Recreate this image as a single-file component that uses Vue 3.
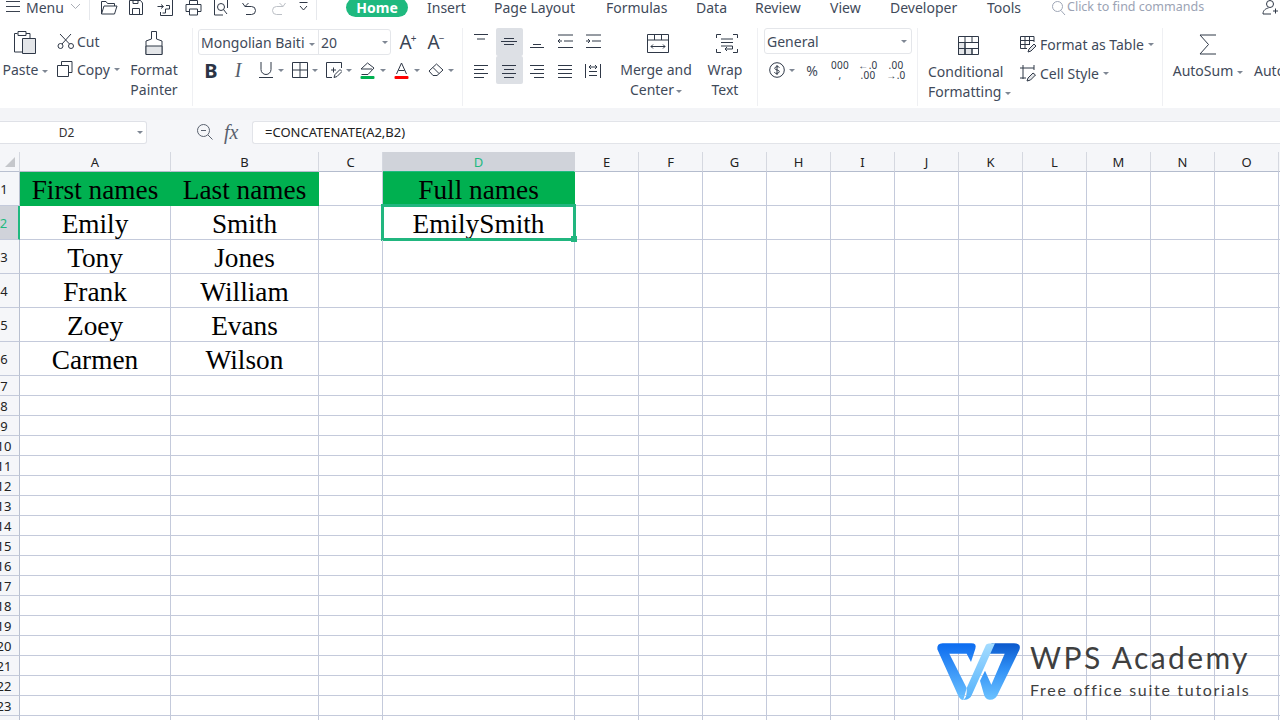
<script setup>
const cols = ['A','B','C','D','E','F','G','H','I','J','K','L','M','N','O','P']
const rows = Array.from({ length: 24 }, (_, i) => i + 1)
const data = {
  A1: 'First names', B1: 'Last names', D1: 'Full names',
  A2: 'Emily', B2: 'Smith', D2: 'EmilySmith',
  A3: 'Tony', B3: 'Jones',
  A4: 'Frank', B4: 'William',
  A5: 'Zoey', B5: 'Evans',
  A6: 'Carmen', B6: 'Wilson'
}
const isHead = (c, r) => r === 1 && (c === 'A' || c === 'B' || c === 'D')
const tabs = [
  { t: 'Insert', w: 67 }, { t: 'Page Layout', w: 112 }, { t: 'Formulas', w: 90 },
  { t: 'Data', w: 59 }, { t: 'Review', w: 75 }, { t: 'View', w: 60 },
  { t: 'Developer', w: 97 }, { t: 'Tools', w: 64 }
]
const aligns = [
  { d: 'M7 6.500h14M10 11h8', a: false },
  { d: 'M6 13.500h16M9 10.500h10M9 16.500h10', a: true },
  { d: 'M10 16.500h8M7 19.500h14', a: false },
  { d: 'M7 7h15M13 13h9M7 19.500h15M11 13H7m2-2l-2 2 2 2', a: false },
  { d: 'M7 7h15M7 19.500h15M13 13h9M7 13h4m-2-2l2 2-2 2', a: false },
  { d: 'M7 9.500h14M7 13.500h10M7 17.500h14M7 21.500h10', a: false },
  { d: 'M7 9.500h14M9 13.500h10M7 17.500h14M9 21.500h10', a: true },
  { d: 'M7 9.500h14M11 13.500h10M7 17.500h14M11 21.500h10', a: false },
  { d: 'M7 9.500h14M7 13.500h14M7 17.500h14M7 21.500h14', a: false },
  { d: 'M6.500 8v14M21.500 8v14M10 11h8M10 11l2-2M10 11l2 2M18 11l-2-2M18 11l-2 2M10 15.500h8M10 19.500h8', a: false }
]
</script>

<template>
  <div class="app">
    <div class="topbar">
      <svg class="ti hamburger" width="16" height="14" viewBox="0 0 16 14"><path d="M1 1.500h14M1 6.500h14M1 11.500h14"/></svg>
      <span class="menu">Menu</span>
      <svg class="ti chev" width="11" height="7" viewBox="0 0 11 7"><path d="M1 1l4.500 4.500L10 1"/></svg>
      <span class="vsep"></span>
      <div class="quick">
        <svg class="ti" width="18" height="16" viewBox="0 0 18 16"><path d="M1.500 14V1.500H6L7.500 3.500H14.500V6M1.500 14L4 6H17L14.500 14Z"/></svg>
        <svg class="ti" width="16" height="16" viewBox="0 0 16 16"><path d="M1.500 0.500H12.500L14.500 3V14.500H1.500ZM4.500 14.500V8.500H11.500V14.500M5 .5V3.500H10V.5"/></svg>
        <svg class="ti" width="16" height="16" viewBox="0 0 16 16"><path d="M5.500 0V-1H15.500V15.500H3.500V12M0.500 6.500H6M4 4.500L6.500 6.500 4 8.500M9 5.500H12.500V9H8.500V13H5.500"/></svg>
        <svg class="ti" width="17" height="16" viewBox="0 0 17 16"><path d="M4.500 4V0.500H12.500V4M4.500 11.500H1V4.500H16V11.500H12.500M4.500 9H12.500V15H4.500Z"/></svg>
        <svg class="ti" width="17" height="16" viewBox="0 0 17 16"><path d="M1.500 0V15H10M14.500 0V8"/><circle cx="8" cy="7" r="3.500"/><path d="M10.500 9.500L14 14"/></svg>
        <svg class="ti" width="17" height="16" viewBox="0 0 17 16"><path d="M4 6.500H10.500A4 4 0 0 1 10.500 14.500H5M1.500 3L4 6.500 7.500 3"/></svg>
        <svg class="ti faded" width="17" height="16" viewBox="0 0 17 16"><path d="M13 6.500H6.500A4 4 0 0 0 6.500 14.500H12M15.500 3L13 6.500 9.500 3"/></svg>
        <svg class="ti" width="11" height="14" viewBox="0 0 11 14"><path d="M1.500 2.500h8M2 6l3.500 4L9 6"/></svg>
      </div>
      <span class="vsep second"></span>
      <span class="pill">Home</span>
      <div class="tabs">
        <span v-for="t in tabs" :key="t.t" class="tab" :style="{ width: t.w + 'px' }">{{ t.t }}</span>
      </div>
      <svg class="ti search" width="16" height="16" viewBox="0 0 16 16"><circle cx="6.500" cy="6.500" r="5"/><path d="M10 10.500L14 15"/></svg>
      <span class="find">Click to find commands</span>
      <svg class="ti user" width="17" height="15" viewBox="0 0 17 15"><circle cx="8" cy="4" r="3.500"/><path d="M1 14C1 10 4 8.500 6.500 8M1 14H9M11 11H16M13.500 8.500V13.500"/></svg>
    </div>

    <div class="ribbon">
      <section class="grp g1">
        <div class="tool paste">
          <div class="ic">
            <svg class="ri" width="22" height="23" viewBox="0 0 22 23"><path d="M3.500 2.500H.5V21H8M12 2.500H16V7M4 .5H12V4.500H4Z"/><path class="fill" d="M8.500 7.500H21.500V22.500H8.500Z"/></svg>
          </div>
          <div class="lbl">Paste<i class="caret"></i></div>
        </div>
        <div class="stack cutcopy">
          <div class="row cut">
            <svg class="ri" width="18" height="17" viewBox="0 0 18 17"><circle cx="3.500" cy="13" r="2.500"/><circle cx="14" cy="13" r="2.500"/><path d="M5 11L14 1M12.500 11L3 1"/></svg>
            <span>Cut</span>
          </div>
          <div class="row copy">
            <svg class="ri" width="16" height="16" viewBox="0 0 16 16"><path d="M4.500 4V.5H15V11.500H11.500M.5 4.500H11.500V15.500H.5Z"/></svg>
            <span>Copy</span><i class="caret"></i>
          </div>
        </div>
        <div class="tool painter">
          <div class="ic">
            <svg class="ri" width="18" height="24" viewBox="0 0 18 24"><path d="M6.500 .5H11.500V8L17 10V23.500H1V10L6.500 8Z"/><path class="fill" d="M1 15H17V23.500H1Z"/></svg>
          </div>
          <div class="lbl">Format<br>Painter</div>
        </div>
      </section>

      <section class="grp g2">
        <div class="fontrow">
          <div class="fselect">
            <div class="fname">Mongolian Baiti<i class="caret"></i></div>
            <div class="fsize">20<i class="caret"></i></div>
          </div>
          <span class="bigA first">A<sup>+</sup></span>
          <span class="bigA">A<sup>−</sup></span>
        </div>
        <div class="fmtrow">
          <b class="bold">B</b>
          <i class="ital">I</i>
          <div class="slot"><svg class="ri" width="16" height="18" viewBox="0 0 16 18"><path d="M3 1V8.500A5 5 0 0 0 13 8.500V1M1 16.500H15"/></svg><i class="caret"></i></div>
          <div class="slot"><svg class="ri" width="16" height="16" viewBox="0 0 16 16"><path d="M.5.5H15.500V15.500H.5ZM8 .5V15.500M.5 8H15.500"/></svg><i class="caret"></i></div>
          <div class="slot"><svg class="ri" width="16" height="16" viewBox="0 0 16 16"><path d="M15.500 6V.5H.5V15.500H6M5 8H10M7.500 5.500V10.500"/><path d="M8 15.500L9 12.500 14 7.500 16 9.500 11 14.500Z"/></svg><i class="caret"></i></div>
          <div class="slot"><svg class="ri" width="16" height="17" viewBox="0 0 16 17"><path d="M1 7L7.500 1 14 6 8 12.500H1.500"/><path d="M1 7H12"/><rect class="nostroke green" x="0.500" y="14" width="14" height="3" rx="1"/></svg><i class="caret"></i></div>
          <div class="slot"><svg class="ri" width="16" height="17" viewBox="0 0 16 17"><path d="M2.500 12L7.500 1 12.500 12M4.500 8.500H10.500"/><rect class="nostroke red" x="0.500" y="14" width="14" height="3" rx="1"/></svg><i class="caret"></i></div>
          <div class="slot"><svg class="ri" width="16" height="16" viewBox="0 0 16 16"><path d="M1 9L8.500 2 15 8 9 13.500H5ZM5 5.500L11 11.500"/></svg><i class="caret"></i></div>
        </div>
      </section>

      <section class="grp g3">
        <div class="aligngrid">
          <div v-for="(a, i) in aligns" :key="i" class="al" :class="{ on: a.a }">
            <svg class="ri" width="28" height="28" viewBox="0 0 28 28"><path :d="a.d"/></svg>
          </div>
        </div>
        <div class="tool merge">
          <div class="ic">
            <svg class="ri" width="22" height="19" viewBox="0 0 22 19"><path d="M.5.5H21.500V18.500H.5ZM.5 6H21.500M7.500.5V6M14.500.5V6M4 12.500H18M4 12.500L6 10.500M4 12.500L6 14.500M18 12.500L16 10.500M18 12.500L16 14.500"/></svg>
          </div>
          <div class="lbl">Merge and<br>Center<i class="caret"></i></div>
        </div>
        <div class="tool wrap">
          <div class="ic">
            <svg class="ri" width="22" height="19" viewBox="0 0 22 19"><path d="M5 .5H.5V4M17 .5H21.500V4M5 18.500H.5V15M17 18.500H21.500V15M5 5H17M5 8.500H17M5 12H16.500V15H9M11 13L9 15 11 17"/></svg>
          </div>
          <div class="lbl">Wrap<br>Text</div>
        </div>
      </section>

      <section class="grp g4">
        <div class="numsel">General<i class="caret"></i></div>
        <div class="numrow">
          <div class="dollar"><svg class="ri" width="16" height="16" viewBox="0 0 16 16"><circle cx="8" cy="8" r="7.300"/><path d="M10.500 5.500C9.500 4 5.500 4.500 5.800 6.500 6 8.500 10.500 7.500 10.300 9.700 10 11.700 6 12 5.300 10.300M8 3V13"/></svg><i class="caret"></i></div>
          <span class="pct">%</span>
          <span class="mini thousand">000<br>,</span>
          <span class="mini">←.0<br>.00</span>
          <span class="mini">.00<br>→.0</span>
        </div>
      </section>

      <section class="grp g5">
        <div class="tool cond">
          <div class="ic">
            <svg class="ri" width="21" height="19" viewBox="0 0 21 19"><path class="fill" d="M.5 6.500H7V18.500H.5ZM7 12.500H14V18.500H7Z"/><path d="M.5.5H20.500V18.500H.5ZM.5 6.500H20.500M.5 12.500H20.500M7 .5V18.500M14 .5V6.500M14 12.500V18.500"/></svg>
          </div>
          <div class="lbl">Conditional<br>Formatting<i class="caret"></i></div>
        </div>
        <div class="stack tablecell">
          <div class="row">
            <svg class="ri" width="17" height="17" viewBox="0 0 17 17"><path d="M7 12.500H.5V.5H14V6M.5 4.500H14M.5 8.500H10M5 .5V12.500M9.500 .5V8.500"/><path class="fill" d="M8 16L9 13 14 8 16 10 11 15Z"/></svg>
            <span>Format as Table</span><i class="caret"></i>
          </div>
          <div class="row second">
            <svg class="ri" width="17" height="17" viewBox="0 0 17 17"><path d="M3 0V14M0 3H14M0 13H6M14 0V5"/><path class="fill" d="M7 16L8 13 13 8 15.500 10 10.500 15Z"/></svg>
            <span>Cell Style</span><i class="caret"></i>
          </div>
        </div>
      </section>

      <section class="g6">
        <div class="tool sum">
          <div class="ic">
            <svg class="ri" width="18" height="21" viewBox="0 0 18 21"><path d="M17 1H1L9.500 10.500 1 20H17"/></svg>
          </div>
          <div class="lbl">AutoSum<i class="caret"></i></div>
        </div>
        <div class="auto">Auto</div>
      </section>
    </div>

    <div class="band"></div>

    <div class="formula">
      <div class="namebox">D2<i class="caret"></i></div>
      <svg class="ri fzoom" width="18" height="18" viewBox="0 0 18 18"><circle cx="7.500" cy="7.500" r="6"/><path d="M5 7.500H10M12 12L16.500 16.500"/></svg>
      <span class="fx">fx</span>
      <div class="finput">=CONCATENATE(A2,B2)</div>
    </div>

    <div class="sheet">
      <div class="corner"><span class="tri"></span></div>
      <div v-for="c in cols" :key="c" class="colh" :class="{ sel: c === 'D' }">{{ c }}</div>
      <template v-for="r in rows" :key="r">
        <div class="rowh" :class="{ sel: r === 2 }">{{ r }}</div>
        <div
          v-for="c in cols"
          :key="c + r"
          class="cell"
          :class="{ head: isHead(c, r), active: c === 'D' && r === 2 }"
        >{{ data[c + r] }}</div>
      </template>
      <div class="logo">
        <svg width="100" height="68" viewBox="0 0 300 204">
          <defs>
            <linearGradient id="lg1" x1="0" y1="0" x2="0" y2="1"><stop offset="0" stop-color="#0c6cf0"/><stop offset="1" stop-color="#6cc2ff"/></linearGradient>
            <linearGradient id="lg2" x1="0" y1="0" x2="0" y2="1"><stop offset="0" stop-color="#a4dcff"/><stop offset="1" stop-color="#55b2fb"/></linearGradient>
            <linearGradient id="lg3" x1="0" y1="0" x2="0" y2="1"><stop offset="0" stop-color="#0a58cc"/><stop offset=".45" stop-color="#2f8ff5"/><stop offset="1" stop-color="#6cc2ff"/></linearGradient>
          </defs>
          <path fill="url(#lg1)" d="M22 34Q20 16 38 16H124Q141 16 136 32L123 72 110 47H58L110 150 100 186Q90 186 84 172Z"/>
          <path fill="url(#lg3)" d="M185 16H252Q275 16 268 36L202 172Q194 187 178 185 166 183 162 170L150 128 165 98 184 140 224 47H170Z"/>
          <path fill="url(#lg2)" d="M168 20Q172 16 195 16L125 172Q118 187 100 185 112 180 110 150Z"/>
        </svg>
        <div class="lt">
          <div class="lt1">WPS Academy</div>
          <div class="lt2">Free office suite tutorials</div>
        </div>
      </div>
    </div>
  </div>
</template>

<style>
html, body { margin: 0; background: #fff; }
</style>

<style scoped>
.app {
  width: 1280px; height: 720px; overflow: hidden; background: #fff;
  font-family: "Noto Sans", sans-serif; font-size: 14px; color: #3f4a5a;
  display: flex; flex-direction: column;
}
svg { display: block; flex: none; }
.ti, .ri { fill: none; stroke: #2f3847; stroke-width: 1; }
.ri .fill { fill: #e4e6e9; }
.ri .nostroke { stroke: none; }
.ri .green { fill: #00b050; }
.ri .red { fill: #f00; }
.faded { stroke: #bcc0c6; }
.caret {
  display: inline-block; width: 0; height: 0; vertical-align: middle; margin-left: 4px;
  border-left: 3px solid transparent; border-right: 3px solid transparent; border-top: 3px solid #7f8794;
}

.topbar { height: 20px; flex: none; display: flex; align-items: flex-start; position: relative; overflow: hidden; }
.hamburger { margin: 0 0 0 5px; stroke: #3b4350; }
.menu { margin-left: 5px; width: 41px; line-height: 15px; }
.chev { margin: 3px 0 0 3px; stroke: #a9adb5; }
.vsep { width: 1px; height: 20px; background: #e6e8ec; margin-left: 8px; }
.vsep.second { margin-left: 0; }
.quick { display: grid; grid-template-columns: repeat(8, 28.300px); margin-left: 10px; width: 216px; }
.pill {
  margin-left: 29px; margin-top: -2px; width: 62px; height: 19px; line-height: 19px; text-align: center;
  background: #1fb97f; color: #fff; font-weight: 700; border-radius: 10px;
}
.tabs { display: flex; margin-left: 19px; }
.tab { line-height: 15px; white-space: nowrap; }
.search { stroke: #9ea6b6; }
.find { font-size: 12.500px; line-height: 14px; color: #9ba3b4; white-space: nowrap; }
.user { margin-left: auto; margin-right: 1px; }

.ribbon { height: 88px; flex: none; display: flex; }
.grp { flex: none; height: 78px; margin-top: 8px; position: relative; display: flex; box-sizing: border-box; border-right: 1px solid #eff0f3; }
.tool { display: flex; flex-direction: column; align-items: center; text-align: center; flex: none; }
.ic { height: 31px; padding-top: 1px; box-sizing: border-box; display: flex; align-items: flex-start; justify-content: center; }
.lbl { line-height: 20px; white-space: nowrap; }
.stack { display: flex; flex-direction: column; flex: none; }
.row { display: flex; align-items: center; height: 24px; white-space: nowrap; }

.g1 { width: 193px; }
.paste { width: 51px; margin-top: 1px; }
.paste .ic { padding: 2px 2px 0 0; }
.cutcopy { margin-left: 6px; width: 66px; padding-top: 1px; }
.cut span { margin-left: 2px; }
.copy { margin-top: 4px; }
.copy span { margin-left: 4px; }
.painter { width: 60px; margin-left: 1px; margin-top: 1px; }
.painter .ic { padding-top: 2px; }

.g2 { width: 270px; flex-direction: column; padding-left: 5px; }
.fontrow { display: flex; align-items: center; height: 28px; }
.fselect { display: flex; width: 193px; height: 26px; box-sizing: border-box; border: 1px solid #e4e6ea; border-radius: 3px; line-height: 25px; white-space: nowrap; }
.fname { width: 120px; box-sizing: border-box; padding-left: 2px; border-right: 1px solid #e4e6ea; }
.fsize { flex: 1; padding-left: 2px; display: flex; justify-content: space-between; align-items: center; padding-right: 2px; }
.fsize .caret { margin-left: 0; }
.bigA { font-size: 19px; line-height: 26px; width: 28px; text-align: center; color: #3a4454; }
.bigA.first { margin-left: 3px; }
.bigA sup { font-size: 10px; line-height: 0; vertical-align: 7px; margin-left: -1px; }
.fmtrow { display: flex; align-items: center; height: 28px; }
.bold { margin-left: 5px; width: 16px; text-align: center; font-size: 20px; color: #2b3445; }
.ital { margin-left: 11px; width: 16px; text-align: center; font-size: 20px; color: #555e6c; font-family: "Liberation Serif", serif; }
.slot { display: flex; align-items: center; width: 34px; flex: none; }
.ital + .slot { margin-left: 12px; }

.g3 { width: 295px; }
.aligngrid { display: grid; grid-template-columns: repeat(5, 28px); grid-auto-rows: 28px; margin-left: 4px; width: 140px; flex: none; }
.al { width: 27px; height: 28px; margin-left: 1px; border-radius: 2px; }
.al svg { margin-left: -1px; }
.al.on { background: #dde0e5; }
.merge { width: 90px; margin-left: 4px; margin-top: 1px; }
.merge .ic { padding: 5px 0 0 3px; }
.merge .caret { margin-left: 2px; }
.wrap { width: 46px; margin-left: 1px; margin-top: 1px; }
.wrap .ic { padding: 5px 0 0 3px; }

.g4 { width: 160px; flex-direction: column; padding-left: 6px; }
.numsel { width: 148px; height: 26px; box-sizing: border-box; border: 1px solid #e4e6ea; border-radius: 3px; line-height: 25px; padding: 0 2px; display: flex; justify-content: space-between; align-items: center; }
.numsel .caret { margin: 0 2px 0 0; }
.numrow { display: flex; align-items: center; height: 28px; margin-top: 2px; }
.dollar { display: flex; align-items: center; margin-left: 5px; width: 29px; }
.pct { width: 16px; margin-left: 6px; font-size: 14px; text-align: center; }
.mini { font-size: 10px; line-height: 10px; text-align: center; width: 28px; letter-spacing: .3px; color: #2f3847; }
.thousand { margin-left: 6px; }

.g5 { width: 245px; }
.cond { width: 96px; align-items: stretch; }
.cond .ic { height: 34px; padding: 8px 0 0 4px; }
.cond .lbl { text-align: left; padding-left: 10px; }
.tablecell { margin-left: 6px; padding-top: 4px; }
.tablecell span { margin-left: 3px; }
.tablecell .second { margin-top: 5px; }

.g6 { display: flex; margin-top: 8px; flex: 1; min-width: 0; overflow: hidden; }
.sum { width: 90px; }
.sum .ic { height: 33px; padding-top: 6px; }
.auto { margin-top: 33px; line-height: 20px; margin-left: 1px; }

.band { height: 12px; flex: none; background: #f3f4f7; }
.formula {
  height: 32px; flex: none; background: #f5f6f9; display: flex; align-items: flex-start; padding-top: 1px; box-sizing: border-box;
}
.namebox {
  width: 147px; height: 23px; box-sizing: border-box; background: #fff; border: 1px solid #dfe1e7; border-left: 0; border-radius: 0 3px 3px 0;
  font-size: 12px; line-height: 21px; text-align: center; color: #333; position: relative; padding-right: 13px;
}
.namebox .caret { position: absolute; right: 3px; top: 9px; }
.fzoom { margin: 2px 0 0 49px; stroke: #59616e; }
.fx { width: 19px; margin-left: 10px; font-family: "Liberation Serif", serif; font-style: italic; font-size: 20px; line-height: 22px; color: #59616e; }
.finput {
  margin-left: 9px; flex: 1; height: 23px; box-sizing: border-box; background: #fff; border: 1px solid #e2e4e9; border-right: 0; border-radius: 3px 0 0 3px;
  font-size: 13px; line-height: 21px; padding-left: 12px; color: #222;
}

.sheet {
  flex: 1; min-height: 0; position: relative; overflow: hidden; background: #fff;
  display: grid;
  grid-template-columns: 20px 151px 148px 64px 192px repeat(12, 64px);
  grid-template-rows: 20px repeat(6, 34px) repeat(18, 20px);
}
.corner { background: #f5f6f9; border-right: 1px solid #d5d8e0; border-bottom: 1px solid #b9c0d0; box-sizing: border-box; position: relative; }
.tri {
  position: absolute; left: 5px; top: 5px; width: 0; height: 0;
  border-left: 10px solid transparent; border-bottom: 10px solid #c5c7cb;
}
.colh {
  background: #f5f6f9; border-right: 1px solid #d5d8e0; border-bottom: 1px solid #b4bccd; box-sizing: border-box;
  font-size: 13px; line-height: 20px; text-align: center; color: #222;
}
.colh.sel { background: #d0d3da; color: #1fb97f; border-right-color: #d0d3da; border-bottom: 1px solid #1fb97f; }
.rowh {
  background: #f5f6f9; border-right: 1px solid #b9c0d0; border-bottom: 1px solid #c4cadb; box-sizing: border-box;
  font-size: 13px; color: #222; display: flex; align-items: center; justify-content: center; padding-right: 11px; white-space: nowrap;
}
.rowh.sel { background: #d0d3da; color: #1fb97f; border-right: 2px solid #1fb97f; }
.cell {
  border-right: 1px solid #c4cadb; border-bottom: 1px solid #c4cadb; box-sizing: border-box;
  font-family: "Liberation Serif", serif; font-size: 27.300px; color: #000; padding-top: 3px;
  display: flex; align-items: center; justify-content: center; white-space: nowrap; position: relative;
}
.cell.head { background: #00b050; border-color: #00b050; }
.cell.active::after {
  content: ""; position: absolute; left: -2px; top: -2px; right: -2px; bottom: -2px;
  border: 3px solid #21b67f; pointer-events: none;
}
.cell.active::before {
  content: ""; position: absolute; right: -3px; bottom: -3px; width: 6px; height: 6px;
  background: #21b67f; z-index: 1;
}
.logo { position: absolute; left: 930px; top: 486px; display: flex; align-items: flex-start; }
.lt { color: #3f3f3f; white-space: nowrap; }
.lt1 { font-family: Lato, sans-serif; font-size: 30px; letter-spacing: 2.400px; line-height: 36px; margin-top: 1px; }
.lt2 { font-family: Lato, sans-serif; font-size: 16px; letter-spacing: 1.700px; line-height: 22px; margin-top: 4px; }
</style>
